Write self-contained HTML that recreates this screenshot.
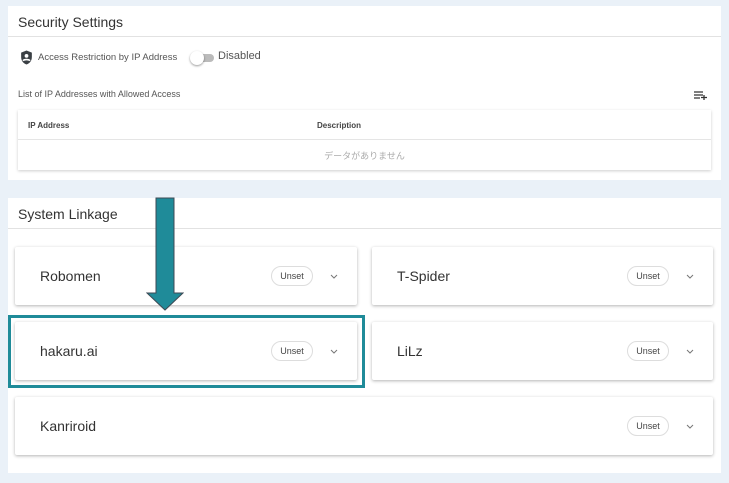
<!DOCTYPE html>
<html><head><meta charset="utf-8"><style>
*{box-sizing:border-box;margin:0;padding:0}
body{width:729px;height:483px;background:#eaf1f8;font-family:"Liberation Sans","Noto Sans CJK JP",sans-serif;position:relative;overflow:hidden;color:#333}
.panel{position:absolute;left:8px;width:713px;background:#fff}
.hdr{height:31px;border-bottom:1px solid #e2e2e2;font-size:14px;padding:8px 10px;color:#333}
.abs{position:absolute}
.card{position:absolute;background:#fff;box-shadow:0 1px 3px rgba(0,0,0,.3);border-radius:2px}
.card .t{position:absolute;left:25px;top:21px;font-size:14px;color:#333}
.chip{position:absolute;width:42px;height:20px;border:1px solid #ddd;border-radius:10px;font-size:9px;text-align:center;line-height:18px;color:#444;top:19px}
.chev{position:absolute;top:27px;width:8px;height:5px}
</style></head><body>
<div class="panel" style="top:6px;height:174px">
<div class="hdr">Security Settings</div>
<svg class="abs" style="left:12px;top:44px" width="13" height="15" viewBox="0 0 24 28"><path d="M12 1L2 5v8c0 7 4 12 10 14 6-2 10-7 10-14V5z" fill="#3a3f44"/><circle cx="12" cy="11" r="3.5" fill="#fff"/><path d="M5.5 20c2-3 11-3 13 0" stroke="#fff" stroke-width="3" fill="none"/></svg>
<div class="abs" style="left:30px;top:46px;font-size:9.5px;color:#555">Access Restriction by IP Address</div>
<div class="abs" style="left:186px;top:48px;width:20px;height:8px;border-radius:4px;background:#bbb"></div>
<div class="abs" style="left:182px;top:45px;width:14px;height:14px;border-radius:7px;background:#fff;box-shadow:0 1px 2px rgba(0,0,0,.4)"></div>
<div class="abs" style="left:210px;top:44px;font-size:11px;color:#555">Disabled</div>
<div class="abs" style="left:10px;top:83px;font-size:9px;color:#555">List of IP Addresses with Allowed Access</div>
<svg class="abs" style="left:686px;top:85px" width="13" height="9" viewBox="0 0 13 9"><path d="M0 1h9M0 4h9M0 7h6M7 6.5h6M10 4v5" stroke="#333" stroke-width="1.3"/></svg>
<div class="abs" style="left:10px;top:104px;width:693px;height:60px;box-shadow:0 1px 3px rgba(0,0,0,.2)">
<div style="height:30px;border-bottom:1px solid #e5e5e5;font-size:8px;font-weight:bold;color:#444;position:relative"><span class="abs" style="left:10px;top:11px">IP Address</span><span class="abs" style="left:299px;top:11px">Description</span></div>
<div style="text-align:center;font-size:9px;color:#aaa;padding-top:9px">データがありません</div>
</div>
</div>
<div class="panel" style="top:198px;height:275px">
<div class="hdr">System Linkage</div>
</div>
<div class="card" style="left:15px;top:247px;width:342px;height:58px"><div class="t">Robomen</div><div class="chip" style="left:256px">Unset</div><svg class="chev" style="left:315px" viewBox="0 0 8 5"><path d="M1 1l3 3 3-3" stroke="#777" fill="none"/></svg></div>
<div class="card" style="left:372px;top:247px;width:341px;height:58px"><div class="t">T-Spider</div><div class="chip" style="left:255px">Unset</div><svg class="chev" style="left:314px" viewBox="0 0 8 5"><path d="M1 1l3 3 3-3" stroke="#777" fill="none"/></svg></div>
<div class="card" style="left:15px;top:322px;width:342px;height:58px"><div class="t">hakaru.ai</div><div class="chip" style="left:256px">Unset</div><svg class="chev" style="left:315px" viewBox="0 0 8 5"><path d="M1 1l3 3 3-3" stroke="#777" fill="none"/></svg></div>
<div class="card" style="left:372px;top:322px;width:341px;height:58px"><div class="t">LiLz</div><div class="chip" style="left:255px">Unset</div><svg class="chev" style="left:314px" viewBox="0 0 8 5"><path d="M1 1l3 3 3-3" stroke="#777" fill="none"/></svg></div>
<div class="card" style="left:15px;top:397px;width:698px;height:58px"><div class="t">Kanriroid</div><div class="chip" style="left:612px">Unset</div><svg class="chev" style="left:671px" viewBox="0 0 8 5"><path d="M1 1l3 3 3-3" stroke="#777" fill="none"/></svg></div>
<div class="abs" style="left:8px;top:315px;width:357px;height:73px;border:3px solid #1f8b99"></div>
<svg class="abs" style="left:146px;top:197px" width="38" height="114" viewBox="0 0 38 114"><path d="M10 1h18v95h9L19 113 1 96h9z" fill="#1f8b99" stroke="#3d4a55" stroke-width="1"/></svg>
</body></html>
